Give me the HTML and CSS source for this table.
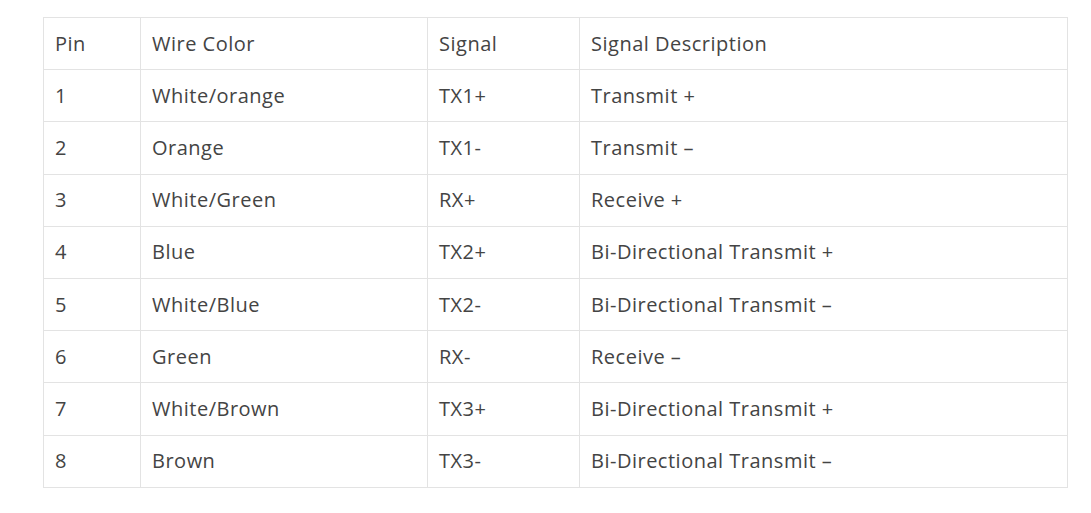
FILE: index.html
```html
<!DOCTYPE html>
<html>
<head>
<meta charset="utf-8">
<link rel="stylesheet" href="styles.css">
</head>
<body>
<table class="pins">
  <colgroup>
    <col class="c1"><col class="c2"><col class="c3"><col class="c4">
  </colgroup>
  <tr><td>Pin</td><td>Wire Color</td><td>Signal</td><td>Signal Description</td></tr>
  <tr><td>1</td><td>White/orange</td><td>TX1+</td><td>Transmit +</td></tr>
  <tr><td>2</td><td>Orange</td><td>TX1-</td><td>Transmit –</td></tr>
  <tr><td>3</td><td>White/Green</td><td>RX+</td><td>Receive +</td></tr>
  <tr><td>4</td><td>Blue</td><td>TX2+</td><td>Bi-Directional Transmit +</td></tr>
  <tr><td>5</td><td>White/Blue</td><td>TX2-</td><td>Bi-Directional Transmit –</td></tr>
  <tr><td>6</td><td>Green</td><td>RX-</td><td>Receive –</td></tr>
  <tr><td>7</td><td>White/Brown</td><td>TX3+</td><td>Bi-Directional Transmit +</td></tr>
  <tr><td>8</td><td>Brown</td><td>TX3-</td><td>Bi-Directional Transmit –</td></tr>
</table>
</body>
</html>
```

FILE: styles.css
```css
html, body {
  margin: 0;
  padding: 0;
  background: #ffffff;
}
body {
  padding: 17px 0 0 43px;
  font-family: "Open Sans", Lato, sans-serif;
  color: #444444;
}
.pins {
  border-collapse: collapse;
  table-layout: fixed;
  width: 1024px;
  font-size: 20px;
  letter-spacing: 0.5px;
}
.pins .c1 { width: 97px; }
.pins .c2 { width: 287px; }
.pins .c3 { width: 152px; }
.pins .c4 { width: 488px; }
.pins td {
  border: 1px solid #e3e3e3;
  padding: 0 11px;
  height: 51.2px;
  line-height: 24px;
  vertical-align: middle;
  text-align: left;
  white-space: nowrap;
}
```
